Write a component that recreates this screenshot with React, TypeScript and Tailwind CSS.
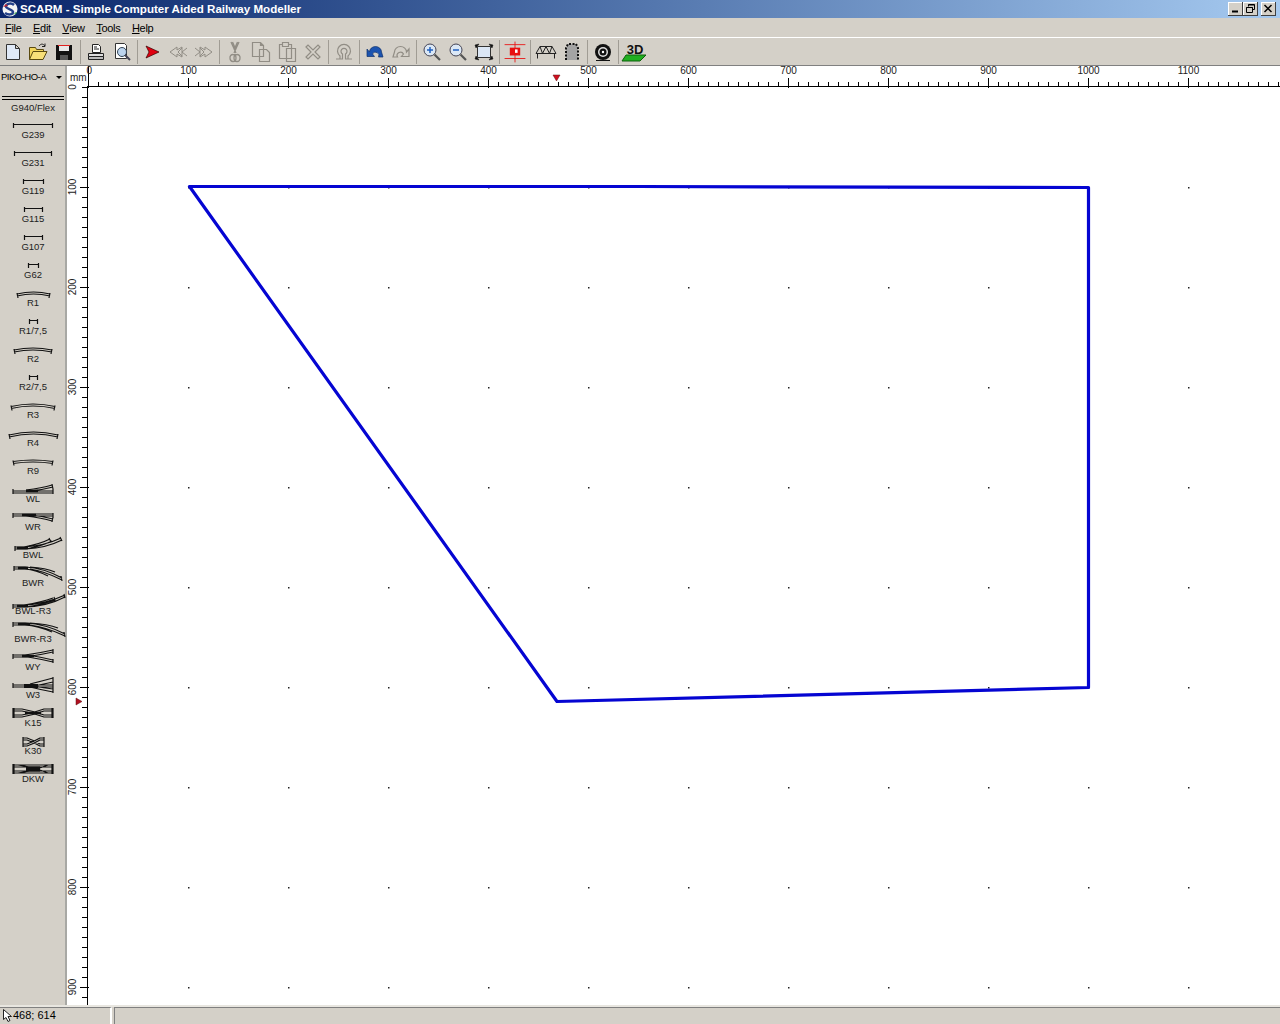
import React from 'react'

const menus = [
  ['F', 'ile'],
  ['E', 'dit'],
  ['V', 'iew'],
  ['T', 'ools'],
  ['H', 'elp'],
]

// ── Toolbar icons (20x20) ──
const Gray = '#918d85'

const icons: Record<string, React.ReactNode> = {
  new: (
    <path d="M3.500 2.500h9l4 4v11h-13z M12.500 2.500v4h4" fill="#dfe9f7" stroke="#333" strokeWidth="1" />
  ),
  open: (
    <>
      <path d="M1.500 17.500v-12h6l1 2h7v2" fill="#f3d65c" stroke="#5a4a10" />
      <path d="M1.500 17.500l3.500-8h14l-4 8z" fill="#f8e078" stroke="#5a4a10" />
      <path d="M11 4c2-2.500 4-2.500 6 0M17 1.500v3h-3" fill="none" stroke="#222" />
    </>
  ),
  save: (
    <>
      <path d="M2 3h16v15h-16z" fill="#111" />
      <path d="M4 3h12v1h-12z" fill="#e02020" />
      <path d="M5 4h10v5h-10z" fill="#e8e8e8" />
      <path d="M6 13h8v5h-8z" fill="#555" />
    </>
  ),
  print: (
    <>
      <path d="M6.500 2.500h6l2 2v6h-8z" fill="#fff" stroke="#222" />
      <path d="M8 5h3M8 7h5" stroke="#222" />
      <path d="M2.500 11.500h15v3h-15z" fill="#ddd" stroke="#222" />
      <path d="M2.500 14.500h15v3h-15z" fill="#bbb" stroke="#222" />
    </>
  ),
  preview: (
    <>
      <path d="M3.500 1.500h9l2 2v13h-11z" fill="#fff" stroke="#333" />
      <circle cx="10" cy="10" r="4.500" fill="#bcd4ee" stroke="#345" />
      <path d="M13 13l5 5" stroke="#445" strokeWidth="2" />
    </>
  ),
  play: <path d="M4 4l13 6-13 6 3-6z" fill="#e00010" stroke="#300" strokeWidth="0.7" />,
  back: (
    <path d="M9 5l-7 5 7 5v-3l5 3v-10l-5 3z M14 6l-4 4 4 4 M19 6l-5 4 5 4" fill="none" stroke={Gray} />
  ),
  forward: (
    <path d="M11 5l7 5-7 5v-3l-5 3v-10l5 3z M6 6l4 4-4 4 M1 6l5 4-5 4" fill="none" stroke={Gray} />
  ),
  cut: (
    <path d="M6 0l5 11M14 0l-5 11M7.500 0l3.500 8M12.500 0l-3.500 8 M8 12.500a3 3.500 0 1 1-3 3.500M12 12.500a3 3.500 0 1 0 3 3.500 M5 16a3 3 0 0 1 3-3.500M15 16a3 3 0 0 0-3-3.500" fill="none" stroke={Gray} strokeWidth="1.300" />
  ),
  copy: (
    <path d="M1.500 0.500h8l3 3v4h3l3 3v9h-10v-5h-7z M9.500 0.500v3h3 M8.500 7.500h4v7h-4z" fill="none" stroke={Gray} strokeWidth="1.200" />
  ),
  paste: (
    <path d="M2.500 2.500h3v-2h6v2h3v4h4v13h-9v-3h-7z M5.500 2.500v2h6v-2 M9.500 6.500h5v10h-5z" fill="none" stroke={Gray} strokeWidth="1.200" />
  ),
  del: (
    <path d="M3 5l2-2 5 5 5-5 2 2-5 5 5 5-2 2-5-5-5 5-2-2 5-5z" fill="none" stroke={Gray} strokeWidth="1.200" />
  ),
  rotate: (
    <path d="M6 17v-3a6.500 6.500 0 1 1 8 0v3h-2.500v-5a3 3 0 1 0-3 0v5z M2 17h4M14 17h4" fill="none" stroke={Gray} strokeWidth="1.200" />
  ),
  undo: (
    <path d="M4.500 10a6 5.500 0 0 1 12 0l1.500 5h-4.500a3 3 0 0 0-6-3l2 2.500h-7.500v-7.500z" fill="#1c54b0" stroke="#10306a" strokeWidth="0.700" />
  ),
  redo: (
    <path d="M15.500 10a6 5.500 0 0 0-12 0l-1.500 5h4.500a3 3 0 0 1 6-3l-2 2.500h7.500v-7.500z" fill="none" stroke={Gray} strokeWidth="1.200" />
  ),
  zoomin: (
    <>
      <circle cx="8" cy="8" r="6" fill="#dbe8f6" stroke="#445" />
      <path d="M5 8h6M8 5v6" stroke="#2060c0" strokeWidth="1.500" />
      <path d="M12.500 12.500l5.500 5.500" stroke="#555" strokeWidth="2.200" />
    </>
  ),
  zoomout: (
    <>
      <circle cx="8" cy="8" r="6" fill="#dbe8f6" stroke="#445" />
      <path d="M5 8h6" stroke="#2060c0" strokeWidth="1.500" />
      <path d="M12.500 12.500l5.500 5.500" stroke="#555" strokeWidth="2.200" />
    </>
  ),
  fit: (
    <>
      <path d="M3.500 4.500h13v11h-13z" fill="#dbe6f4" stroke="#333" />
      <path d="M1 3l4-1-3 4zM19 3l-4-1 3 4zM1 17l4 1-3-4zM19 17l-4 1 3-4z" fill="#111" stroke="#111" strokeWidth="0.500" />
    </>
  ),
  bridge: (
    <path d="M4 4.500h12L20 11.500H0zM1.500 11.500v5M18.500 11.500v5M4 4.500l2.500 7 3.500-7 3.500 7 2.500-7" fill="none" stroke="#222" />
  ),
  tunnel: (
    <path d="M4 18v-12l2-4h8l2 4v12" fill="#a4a4a4" stroke="#111" strokeDasharray="2 1.500" strokeWidth="2" />
  ),
  roll: (
    <>
      <circle cx="10" cy="10" r="8" fill="#111" />
      <circle cx="10" cy="10" r="5" fill="#ddd" />
      <circle cx="10" cy="10" r="3.500" fill="#111" />
      <circle cx="10" cy="10" r="1.200" fill="#fff" />
      <path d="M3 18.500h14" stroke="#111" />
    </>
  ),
}

function ToolIcon({ name }: { name: string }) {
  if (name === 'red') {
    return (
      <svg width="30" height="24" viewBox="0 0 30 24">
        <path d="M3 3.500h24M3 19.500h24M15 0v24" stroke="#e81010" />
        <path d="M9 7h12v9h-12z" fill="#e81010" />
        <path d="M15 9h3v4h-3z" fill="#fff" />
      </svg>
    )
  }
  if (name === '3d') {
    return (
      <svg width="26" height="22" viewBox="0 0 26 22">
        <path d="M5 14h20l-6 6h-18z" fill="#20b020" stroke="#0c600c" />
        <text x="14" y="13" textAnchor="middle" fontFamily="'Liberation Sans', sans-serif" fontWeight="700" fontSize="13" fill="#111">3D</text>
      </svg>
    )
  }
  return (
    <svg width="20" height="20" viewBox="0 0 20 20" className="overflow-visible">
      {icons[name]}
    </svg>
  )
}

// name + width of slot; "sep" is a divider
const tools: { n: string; w: number }[] = [
  { n: 'new', w: 25 }, { n: 'open', w: 26 }, { n: 'save', w: 26 },
  { n: 'sep', w: 6 },
  { n: 'print', w: 26 }, { n: 'preview', w: 26 },
  { n: 'sep', w: 4 },
  { n: 'play', w: 26 }, { n: 'back', w: 26 }, { n: 'forward', w: 26 },
  { n: 'sep', w: 5 },
  { n: 'cut', w: 26 }, { n: 'copy', w: 26 }, { n: 'paste', w: 26 }, { n: 'del', w: 26 },
  { n: 'sep', w: 5 },
  { n: 'rotate', w: 26 },
  { n: 'sep', w: 5 },
  { n: 'undo', w: 26 }, { n: 'redo', w: 26 },
  { n: 'sep', w: 5 },
  { n: 'zoomin', w: 26 }, { n: 'zoomout', w: 26 }, { n: 'fit', w: 26 },
  { n: 'sep', w: 5 },
  { n: 'red', w: 26 },
  { n: 'sep', w: 5 },
  { n: 'bridge', w: 26 }, { n: 'tunnel', w: 26 },
  { n: 'sep', w: 5 },
  { n: 'roll', w: 26 },
  { n: 'sep', w: 5 },
  { n: '3d', w: 26 },
]

// ── Track library (x is page x, y is relative to icon centre) ──
const straight = (a: number, b: number) =>
  `M${a} -1.500H${b}M${a + 0.5} -3V2M${b - 0.5} -3V2`
const curve = (a: number, b: number, rise: number) => {
  const m = (a + b) / 2
  return `M${a} ${rise - 2}Q${m} ${-rise - 2} ${b} ${rise - 2}M${a} ${rise}Q${m} ${-rise} ${b} ${rise}M${a} ${rise - 3}L${a + 1} ${rise + 2}M${b} ${rise - 3}L${b - 1} ${rise + 2}`
}
const thick = (a: number, b: number, y: number) => (
  <path d={`M${a} ${y}H${b}`} stroke="#111" strokeWidth="2.500" />
)

const library: { label: string; d: string; extra?: React.ReactNode }[] = [
  { label: 'G239', d: straight(13, 53) },
  { label: 'G231', d: straight(14, 52) },
  { label: 'G119', d: straight(23, 44) },
  { label: 'G115', d: straight(24, 43) },
  { label: 'G107', d: straight(24, 43) },
  { label: 'G62', d: straight(28, 39) },
  { label: 'R1', d: curve(17, 50, 2) },
  { label: 'R1/7,5', d: straight(29, 38) },
  { label: 'R2', d: curve(14, 52, 2) },
  { label: 'R2/7,5', d: straight(29, 38) },
  { label: 'R3', d: curve(11, 55, 2.5) },
  { label: 'R4', d: curve(9, 58, 3) },
  { label: 'R9', d: curve(13, 53, 1.5) },
  {
    label: 'WL',
    d: 'M13 1H53M13 3H53M13 -1V4M53 -1V4M26 0Q42 -2 52 -5M30 1Q42 0 53 -3M52 -6L53 -1',
    extra: thick(26, 38, 1),
  },
  {
    label: 'WR',
    d: 'M13 -4H53M13 -2H53M13 -5V0M53 -5V0M26 -2Q42 0 52 3M30 -3Q42 -2 53 1M52 4L53 -1',
    extra: thick(22, 36, -3),
  },
  {
    label: 'BWL',
    d: 'M15 1H24Q40 -2 50 -7M15 3H26Q42 0 52 -5M24 1Q44 0 61 -8M26 3Q46 2 62 -6M15 0V5M49 -8L51 -4M60 -9L62 -5',
    extra: thick(17, 28, 2),
  },
  {
    label: 'BWR',
    d: 'M14 -7H25Q44 -6 62 4M14 -5H25Q36 -4 48 2M30 -7Q46 -6 55 -2M30 -5Q44 -3 62 6M14 -8V-3M61 2L62 7',
    extra: thick(18, 28, -6),
  },
  {
    label: 'BWL-R3',
    d: 'M13 3H24Q42 0 53 -4M13 5H26Q44 2 55 -2M24 3Q46 2 65 -7M26 5Q48 4 65 -5M13 2V7M54 -5L55 -1M64 -8L65 -4',
    extra: thick(17, 28, 4),
  },
  {
    label: 'BWR-R3',
    d: 'M13 -7H25Q46 -6 65 4M13 -5H25Q38 -4 52 2M30 -7Q48 -6 58 -2M30 -5Q46 -3 65 6M13 -8V-3M64 2L65 7',
    extra: thick(18, 30, -6),
  },
  {
    label: 'WY',
    d: 'M13 -3H25Q40 -5 53 -8M13 -1H25Q40 -3 53 -6M28 -3Q40 -1 53 2M28 -1Q40 1 53 4M13 -4V1M53 -9V-4M53 1V5',
    extra: thick(22, 34, -2),
  },
  {
    label: 'W3',
    d: 'M13 -1H53M13 1H53M13 -3V2M53 -3V2M30 -2Q42 -5 53 -8M30 1Q42 4 53 6M34 0Q44 -2 53 -4M34 0Q44 2 53 3M53 -9V7',
    extra: <path d="M24 0H38" stroke="#111" strokeWidth="4" />,
  },
  {
    label: 'K15',
    d: 'M13 -5H22Q33 -3 44 1H53M13 -3H22Q33 -1 44 3H53M13 1H22Q33 -1 44 -5H53M13 3H22Q33 1 44 -3H53M13 -6V4M53 -6V4M14 -6V4M52 -6V4',
    extra: thick(25, 41, -1),
  },
  {
    label: 'K30',
    d: 'M23 -4H27Q33 -2 40 2H44M23 -2H27Q33 0 40 4H44M23 2H27Q33 0 40 -4H44M23 4H27Q33 2 40 -2H44M23 -5V5M44 -5V5',
  },
  {
    label: 'DKW',
    d: 'M13 -5H53M13 3H53M13 -3H53M13 1H53M13 -6V4M53 -6V4M14 -6V4M52 -6V4M18 -5Q33 -3 48 3M18 3Q33 1 48 -5',
    extra: <path d="M26 -1H40" stroke="#111" strokeWidth="5" />,
  },
]

const topTicks = Array.from({ length: 120 }, (_, i) => i * 10)
const leftTicks = Array.from({ length: 92 }, (_, i) => i * 10)
const hundreds = [100, 200, 300, 400, 500, 600, 700, 800, 900]

function Canvas() {
  return (
    <svg className="block" width="1213" height="939" viewBox="67 66 1213 939" fontFamily="'Liberation Sans', sans-serif">
      <rect x="67" y="66" width="1213" height="939" fill="#fff" />

      {/* top ruler */}
      <path d="M87 86.500H1280" stroke="#000" shapeRendering="crispEdges" />
      {topTicks.map((t) => (
        <path
          key={t}
          d={t % 100 === 0 ? `M${88.5 + t} ${t === 0 ? 66 : 78}V88` : `M${88.5 + t} 82V86`}
          stroke="#000"
          shapeRendering="crispEdges"
        />
      ))}
      <text x="86.500" y="74" fontSize="10" fill="#222">0</text>
      {[...hundreds, 1000, 1100].map((v) => (
        <text key={v} x={88.5 + v} y="74" fontSize="10" fill="#222" textAnchor="middle">{v}</text>
      ))}
      <text x="70" y="81" fontSize="10" fill="#222">mm</text>
      <path d="M553 75h7l-3.500 6z" fill="#d01020" stroke="#601010" strokeWidth="0.500" />

      {/* left ruler */}
      <path d="M87.500 86V1005" stroke="#000" shapeRendering="crispEdges" />
      {leftTicks.map((t) => (
        <path
          key={t}
          d={t % 100 === 0 ? `M${t === 0 ? 82 : 80} ${87.5 + t}H89` : `M82 ${87.5 + t}H87`}
          stroke="#000"
          shapeRendering="crispEdges"
        />
      ))}
      <text transform="translate(75.500 87) rotate(-90)" fontSize="10" fill="#222" textAnchor="middle">0</text>
      {hundreds.map((v) => (
        <text key={v} transform={`translate(75.500 ${87 + v}) rotate(-90)`} fontSize="10" fill="#222" textAnchor="middle">{v}</text>
      ))}
      <path d="M76 698v7l6-3.500z" fill="#b01020" stroke="#601010" strokeWidth="0.500" />

      {/* grid dots */}
      {hundreds.concat(1000).map((y) =>
        [100, 200, 300, 400, 500, 600, 700, 800, 900, 1000, 1100].map((x) => (
          <rect key={`${x}-${y}`} x={88 + x} y={87 + y} width="1.500" height="1.500" fill="#222" />
        ))
      )}

      {/* layout outline */}
      <path
        d="M189.500 186.500L638 186.500L1088.500 187.500L1088.500 687.500L557 701.500Z"
        fill="none"
        stroke="#0505d2"
        strokeWidth="3.200"
        strokeLinejoin="round"
      />
    </svg>
  )
}

export default function App() {
  return (
    <div className="flex h-[1024px] w-[1280px] flex-col overflow-hidden bg-[#d4d0c8] font-['Liberation_Sans',Arial,sans-serif] text-black">

      {/* ── Title bar ── */}
      <div className="flex h-[18px] items-center bg-gradient-to-r from-[#0a246a] to-[#a6caf0] pl-[2px] pr-[4px]">
        <svg width="16" height="16" viewBox="0 0 16 16" className="shrink-0">
          <circle cx="8" cy="8" r="7.500" fill="#f4f4f4" />
          <path d="M12 4c-2-2-7-2-8 1s7 3 7 6-5 3-8 1" fill="none" stroke="#24408a" strokeWidth="2.500" />
          <path d="M1 6l3-3 2 2z" fill="#c02030" />
          <path d="M11 14l3-3 1 1z" fill="#30a040" />
        </svg>
        <span className="mb-[1px] ml-[2px] whitespace-nowrap text-[11.6px] font-bold leading-none text-white">
          SCARM - Simple Computer Aided Railway Modeller
        </span>
        <div className="ml-auto flex items-center">
          <WinButton kind="min" />
          <WinButton kind="max" />
          <div className="w-[3px]" />
          <WinButton kind="close" />
        </div>
      </div>

      {/* ── Menu bar ── */}
      <div className="flex h-[20px] items-center border-b border-white pl-[5px] pt-[1px] text-[11px] tracking-[-0.3px]">
        {menus.map(([k, rest]) => (
          <span key={k} className="mr-[11.5px] leading-none">
            <span className="underline">{k}</span>{rest}
          </span>
        ))}
      </div>

      {/* ── Toolbar ── */}
      <div className="flex h-[28px] items-center border-b border-[#808080]">
        {tools.map((t, i) =>
          t.n === 'sep' ? (
            <div key={i} className="flex h-[24px] justify-center" style={{ width: t.w }}>
              <div className="w-[1px] bg-[#a09c94]" />
            </div>
          ) : (
            <div key={i} className="flex h-[24px] items-center justify-center" style={{ width: t.w }}>
              <ToolIcon name={t.n} />
            </div>
          )
        )}
      </div>

      {/* ── Main ── */}
      <div className="flex h-[939px]">
        {/* Track library */}
        <div className="flex w-[67px] shrink-0 flex-col border-r-2 border-[#a8a8a4]">
          <div className="flex h-[22px] items-center justify-between pl-[1px] pr-[3px] text-[9.5px] leading-none tracking-[-0.5px]">
            <span>PIKO-HO-A</span>
            <span className="h-0 w-0 border-x-[3px] border-t-[3px] border-x-transparent border-t-black" />
          </div>
          <div className="ml-[2px] mr-[1px] mt-[8px] h-[4px] border-y border-black" />
          <div className="mt-[2px] w-[66px] text-center text-[9.5px] leading-[12px] text-[#222]">G940/Flex</div>
          <div className="mt-[2px]" />
          {library.map((t) => (
            <div key={t.label} className="flex h-[28px] w-[66px] shrink-0 flex-col items-center">
              <svg width="66" height="12" viewBox="0 -6 66 12" className="mt-[4px] block shrink-0 overflow-visible">
                <path d={t.d} fill="none" stroke="#111" strokeWidth="1.200" />
                {t.extra}
              </svg>
              <span className="-mt-[3px] whitespace-nowrap text-[9.5px] leading-[12px] text-[#222]">{t.label}</span>
            </div>
          ))}
        </div>
        <Canvas />
      </div>

      {/* ── Status bar ── */}
      <div className="flex h-[19px] border-t-2 border-[#e8e6e0] text-[11px]">
        <div className="flex w-[112px] items-center border-r-2 border-white border-t border-t-[#808080] pb-[1px] pl-[3px]">
          <svg width="9" height="13" viewBox="0 0 9 13" className="shrink-0">
            <path d="M0.500 0.500V10.500L3 8.500L5 12.500L7 11.500L5 7.500H8.500z" fill="#fff" stroke="#222" />
          </svg>
          <span className="ml-[1px] leading-none">468; 614</span>
        </div>
        <div className="ml-[2px] flex-1 border-l border-t border-[#808080]" />
      </div>
    </div>
  )
}

function WinButton({ kind }: { kind: 'min' | 'max' | 'close' }) {
  return (
    <div className="flex h-[14px] w-[15px] items-center justify-center border-b border-r border-b-[#404040] border-r-[#404040] bg-[#d4d0c8] shadow-[inset_1px_1px_0_#fff]">
      <svg width="11" height="10" viewBox="0 0 11 10">
        {kind === 'min' && <path d="M2 7.500h6" stroke="#000" strokeWidth="2" />}
        {kind === 'max' && (
          <path d="M3.500 2.500v-2h6v5h-2M1.500 3.500h6v5h-6zM1.500 3.500h6M3.500 1h6" fill="none" stroke="#000" />
        )}
        {kind === 'close' && <path d="M1.500 1l7 7M8.500 1l-7 7" stroke="#000" strokeWidth="1.500" />}
      </svg>
    </div>
  )
}
